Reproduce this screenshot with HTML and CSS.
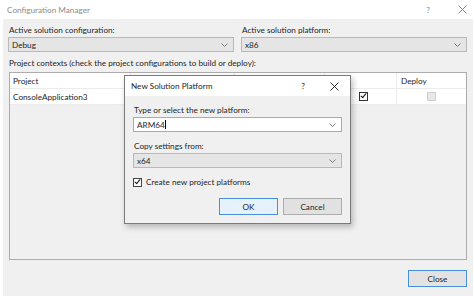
FILE: index.html
```html
<!DOCTYPE html>
<html lang="en">
    <head>
        <meta charset="UTF-8">
        <title>Configuration Manager</title>
        <link rel="stylesheet" href="styles.css">
    </head>
    <body>
        <div class="window">
            <div class="titlebar">
                <span class="title">Configuration Manager</span>
                <span class="help">?</span>
                <svg class="close-x" width="9" height="9" viewBox="0 0 9 9"><path d="M0.5 0.5 L8.5 8.5 M8.5 0.5 L0.5 8.5" stroke="#8a8a8a" stroke-width="1"/></svg>
            </div>

            <div class="client">
                <div class="fields">
                    <div class="field">
                        <label>Active solution configuration:</label>
                        <div class="combo">
                            <span>Debug</span>
                            <svg class="chev" width="7" height="4" viewBox="0 0 7 4"><path d="M0.5 0.5 L3.5 3.5 L6.5 0.5" fill="none" stroke="#7a7a7a"/></svg>
                        </div>
                    </div>
                    <div class="field">
                        <label>Active solution platform:</label>
                        <div class="combo">
                            <span>x86</span>
                            <svg class="chev" width="7" height="4" viewBox="0 0 7 4"><path d="M0.5 0.5 L3.5 3.5 L6.5 0.5" fill="none" stroke="#7a7a7a"/></svg>
                        </div>
                    </div>
                </div>

                <label class="contexts">Project contexts (check the project configurations to build or deploy):</label>

                <!-- middle headers sit under the dialog, so they stay empty -->
                <div class="grid">
                    <div class="grid-row header">
                        <div class="cell project">Project</div>
                        <div class="cell config"></div>
                        <div class="cell platform"></div>
                        <div class="cell build"></div>
                        <div class="cell deploy">Deploy</div>
                    </div>
                    <div class="grid-row">
                        <div class="cell project">ConsoleApplication3</div>
                        <div class="cell config"></div>
                        <div class="cell platform"></div>
                        <div class="cell build"><span class="check on"></span></div>
                        <div class="cell deploy"><span class="check off"></span></div>
                    </div>
                </div>

                <div class="footer">
                    <button class="btn default">Close</button>
                </div>
            </div>

            <div class="dialog">
                <div class="titlebar dlg-title">
                    <span class="title">New Solution Platform</span>
                    <span class="help">?</span>
                    <svg class="close-x" width="9" height="9" viewBox="0 0 9 9"><path d="M0.5 0.5 L8.5 8.5 M8.5 0.5 L0.5 8.5" stroke="#333" stroke-width="1"/></svg>
                </div>
                <div class="dlg-body">
                    <label>Type or select the new platform:</label>
                    <div class="combo edit">
                        <span>ARM64<i class="caret"></i></span>
                        <svg class="chev" width="7" height="4" viewBox="0 0 7 4"><path d="M0.5 0.5 L3.5 3.5 L6.5 0.5" fill="none" stroke="#7a7a7a"/></svg>
                    </div>
                    <label class="copy">Copy settings from:</label>
                    <div class="combo">
                        <span>x64</span>
                        <svg class="chev" width="7" height="4" viewBox="0 0 7 4"><path d="M0.5 0.5 L3.5 3.5 L6.5 0.5" fill="none" stroke="#7a7a7a"/></svg>
                    </div>
                    <div class="option">
                        <span class="check on"></span>
                        <span>Create new project platforms</span>
                    </div>
                    <div class="dlg-buttons">
                        <button class="btn default">OK</button>
                        <button class="btn">Cancel</button>
                    </div>
                </div>
            </div>
        </div>
    </body>
</html>
```

FILE: styles.css
```css
body {
    margin: 0;
    background-color: #ffffff;
    font-family: Lato, "Noto Sans", sans-serif;
    font-size: 8.2px;
    color: #1e1e1e;
}

.window {
    position: relative;
    width: 474px;
    height: 297px;
    display: flex;
    flex-direction: column;
}

.titlebar {
    height: 20px;
    display: flex;
    align-items: center;
    padding-left: 7px;
    color: #8c8c8c;
}

.titlebar .title {
    flex: 1;
}

.titlebar .help {
    width: 10px;
    text-align: center;
    margin-right: 25px;
}

.titlebar .close-x {
    margin-right: 7px;
}

.client {
    flex: 1;
    background-color: #f0f0f0;
    margin: 0 1px 1px 3px;
    padding: 4px 6px 9px 5px;
    display: flex;
    flex-direction: column;
}

label {
    display: block;
    line-height: 14px;
    padding-left: 1px;
}

.fields {
    display: flex;
    gap: 7px;
}

.field {
    flex: 1;
}

.combo {
    height: 13px;
    border: 1px solid #b9b9b9;
    background-color: #e5e5e5;
    display: flex;
    align-items: center;
    justify-content: space-between;
    padding: 0 5px 0 3px;
}

.contexts {
    margin-top: 4px;
}

.grid {
    margin: 2px 0 0 1px;
    height: 186px;
    border: 1px solid #acacac;
    background-color: #f0f0f0;
}

.grid-row {
    display: flex;
    height: 15px;
    background-color: #ffffff;
    border-bottom: 1px solid #ececec;
}

.cell {
    box-sizing: border-box;
    display: flex;
    align-items: center;
    padding-left: 3px;
    border-right: 1px solid #ececec;
}

.project { width: 121px; }
.config { width: 104px; }
.platform { width: 90px; }
.build { width: 72px; }
.deploy { flex: 1; border-right: none; justify-content: center; padding-left: 0; }

.header .deploy { justify-content: flex-start; padding-left: 4px; }

.grid-row .build .check { margin-left: 31px; }

.check {
    display: inline-block;
    width: 7px;
    height: 7px;
    border: 1px solid #333;
    background-color: #fff;
    position: relative;
}

.check.on::after {
    content: "";
    position: absolute;
    left: 2px;
    top: -1px;
    width: 2px;
    height: 5px;
    border: solid #111;
    border-width: 0 1.5px 1.5px 0;
    transform: rotate(40deg);
}

.check.off {
    border-color: #cfcfcf;
    background-color: #e8e8e8;
}

.footer {
    display: flex;
    justify-content: flex-end;
    margin-top: 10px;
}

.btn {
    font: inherit;
    color: #1e1e1e;
    width: 59px;
    height: 17px;
    padding: 0;
    border: 1px solid #adadad;
    background-color: #e1e1e1;
}

.btn.default {
    border: 1.5px solid #4a90d9;
}

.footer .btn {
    width: 59px;
    background-color: #e3e3e3;
}

.dialog {
    position: absolute;
    left: 124px;
    top: 75px;
    width: 225px;
    height: 147px;
    border: 1px solid #7a7a7a;
    background-color: #f0f0f0;
    box-shadow: 2px 3px 6px rgba(0, 0, 0, 0.25);
    display: flex;
    flex-direction: column;
}

.dlg-title {
    background-color: #ffffff;
    color: #1e1e1e;
    padding-left: 6px;
}

.dlg-title .help {
    margin-right: 22px;
}

.dlg-title .close-x {
    margin-right: 11px;
}

.dlg-body {
    padding: 7px 8px 0 8px;
}

.combo.edit {
    background-color: #ffffff;
    border-color: #7eb4ea;
}

.caret {
    display: inline-block;
    width: 1px;
    height: 9px;
    background-color: #000;
    vertical-align: -1px;
}

.copy {
    margin-top: 7px;
}

.option {
    display: flex;
    align-items: center;
    gap: 4px;
    margin-top: 9px;
}

.option .check {
    border-color: #444;
}

.dlg-buttons {
    display: flex;
    justify-content: flex-end;
    gap: 5px;
    margin-top: 11px;
}

.dlg-buttons .btn.default {
    background-color: #e5f1fb;
    border: 1px solid #4a90d9;
}
```
